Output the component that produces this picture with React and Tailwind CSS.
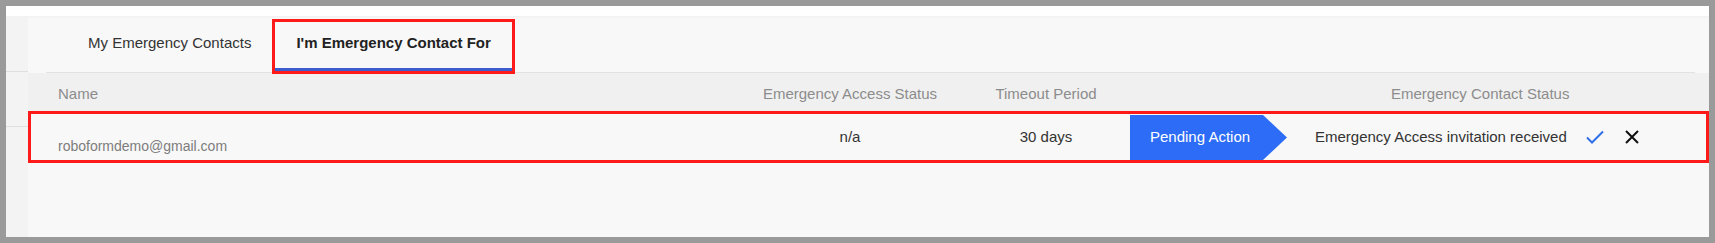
export default function App() {
  const font = { fontFamily: '"Liberation Sans", Arial, Helvetica, sans-serif' };
  return (
    <div className="w-[1715px] h-[243px] bg-[#9a9a9a] p-[6px] overflow-hidden" style={font}>
      <div className="w-full h-full bg-[#f8f8f8] flex flex-col">
        <div className="h-[10px] bg-white shrink-0 shadow-[0_1px_3px_rgba(0,0,0,0.04)]" />
        <div className="flex flex-1 min-h-0">
          {/* sidebar sliver */}
          <div className="w-[22px] shrink-0 bg-[#f3f3f3] flex flex-col">
            <div className="h-[56px] border-b border-[#dedede]" />
            <div className="h-[55px] border-b border-[#dedede]" />
          </div>
          {/* main panel */}
          <div className="flex-1 flex flex-col min-w-0">
            {/* tabs */}
            <div className="ml-[18px] mr-[14px] h-[57px] border-b border-[#e2e2e2] flex items-end shrink-0">
              <div className="ml-[18px] h-[55px] -mb-[2px] border-[3px] border-transparent pl-[21px] pr-[18px] pb-[7px] flex items-center text-[15px] text-[#333333] whitespace-nowrap">
                My Emergency Contacts
              </div>
              <div className="relative z-10 h-[55px] -mb-[2px] border-[3px] border-[#ff1a1a] flex flex-col">
                <div className="flex-1 px-[21px] flex items-center pt-[0px] pb-[4px] text-[15px] font-bold text-[#222222] whitespace-nowrap">
                  I'm Emergency Contact For
                </div>
                <div className="h-[3px] bg-[#3f5bd0]" />
              </div>
            </div>
            {/* header row */}
            <div className="h-[38px] bg-[#f0f0f0] border-x-[3px] border-transparent flex items-center pt-[4px] text-[15px] text-[#8c8c8c] shrink-0 whitespace-nowrap">
              <div className="w-[707px] pl-[27px]">Name</div>
              <div className="w-[224px] text-center">Emergency Access Status</div>
              <div className="w-[168px] text-center">Timeout Period</div>
              <div className="flex-1 pl-[261px]">Emergency Contact Status</div>
            </div>
            {/* data row */}
            <div className="h-[52px] border-[3px] border-[#ff1a1a] flex items-center text-[15px] text-[#333333] whitespace-nowrap shrink-0">
              <div className="w-[707px] pl-[27px] self-end pb-[6px] text-[14px] leading-[16px] text-[#7d7d7d]">
                roboformdemo@gmail.com
              </div>
              <div className="w-[224px] text-center">n/a</div>
              <div className="w-[168px] text-center">30 days</div>
              <div className="flex-1 flex items-center h-full">
                <div className="self-end h-[45px] w-[157px] bg-[#2c6cf6] text-white pl-[20px] flex items-center [clip-path:polygon(0_0,133px_0,157px_50%,133px_100%,0_100%)]">
                  Pending Action
                </div>
                <div className="ml-[28px]">Emergency Access invitation received</div>
                <svg className="ml-[19px]" width="18" height="14" viewBox="0 0 18 14" fill="none">
                  <path d="M1 7.5 L6 12.5 L17 1.5" stroke="#2f6fe8" strokeWidth="2" />
                </svg>
                <svg className="ml-[21px]" width="14" height="14" viewBox="0 0 14 14" fill="none">
                  <path d="M1 1 L13 13 M13 1 L1 13" stroke="#111111" strokeWidth="2" />
                </svg>
              </div>
            </div>
          </div>
        </div>
      </div>
    </div>
  );
}
